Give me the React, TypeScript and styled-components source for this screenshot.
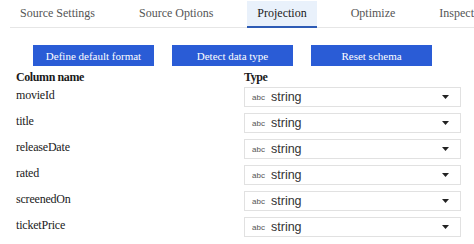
import React, { FC } from 'react';
import styled, { createGlobalStyle } from 'styled-components';

const GlobalStyle = createGlobalStyle`
  html, body {
    margin: 0;
    padding: 0;
    background: #ffffff;
  }
  body {
    font-family: 'Liberation Serif', 'Times New Roman', serif;
    color: #1a1a1a;
    overflow: hidden;
  }
`;

const tabs = ['Source Settings', 'Source Options', 'Projection', 'Optimize', 'Inspect'];
const columns = ['movieId', 'title', 'releaseDate', 'rated', 'screenedOn', 'ticketPrice'];

const Page = styled.div`
  width: 474px;
  height: 244px;
  overflow: hidden;
`;

const TabBar = styled.div`
  display: flex;
  gap: 24px;
  height: 27px;
  margin-left: 10px;
  border-bottom: 1px solid #e6e6e6;
  white-space: nowrap;
`;

const Tab = styled.div<{ $active?: boolean }>`
  display: flex;
  align-items: center;
  padding: 0 10px;
  margin-top: 1px;
  font-size: 12px;
  color: ${(p) => (p.$active ? '#1a1a1a' : '#555555')};
  background: ${(p) => (p.$active ? '#e9f1fb' : 'transparent')};
  border-bottom: 2px solid ${(p) => (p.$active ? '#2d5bb5' : 'transparent')};
  margin-bottom: -1px;
`;

const Toolbar = styled.div`
  display: flex;
  gap: 18px;
  padding-left: 33px;
  margin-top: 17px;
`;

const Button = styled.button`
  width: 121px;
  height: 21px;
  border: none;
  border-radius: 0;
  background: #2a5cd6;
  color: #ffffff;
  font-family: 'Liberation Serif', 'Times New Roman', serif;
  font-size: 11px;
  padding: 0;
  cursor: pointer;
`;

const Table = styled.div`
  display: grid;
  grid-template-columns: 228px 217px;
  row-gap: 6px;
  padding-left: 16px;
  margin-top: 3px;
`;

const HeaderCell = styled.div`
  font-weight: bold;
  font-size: 12px;
  letter-spacing: -0.4px;
  height: 17px;
  line-height: 17px;
  margin-bottom: -5px;
`;

const NameCell = styled.div`
  display: flex;
  align-items: center;
  height: 20px;
  font-size: 12px;
  letter-spacing: -0.2px;
  padding-bottom: 3px;
  box-sizing: border-box;
`;

const Select = styled.div`
  display: flex;
  align-items: center;
  height: 20px;
  box-sizing: border-box;
  border: 1px solid #e1e1e1;
  padding: 0 11px 0 7px;
  font-family: 'Liberation Sans', Arial, sans-serif;
`;

const TypeBadge = styled.span`
  font-size: 8px;
  color: #555555;
  width: 19px;
`;

const TypeName = styled.span`
  flex: 1;
  font-size: 12.5px;
  color: #333333;
`;

const Caret = styled.svg`
  display: block;
`;

const TypeSelect: FC = () => (
  <Select>
    <TypeBadge>abc</TypeBadge>
    <TypeName>string</TypeName>
    <Caret width="7" height="4" viewBox="0 0 7 4">
      <path d="M0 0H7L3.5 4Z" fill="#222222" />
    </Caret>
  </Select>
);

const App: FC = () => (
  <Page>
    <GlobalStyle />
    <TabBar>
      {tabs.map((t) => (
        <Tab key={t} $active={t === 'Projection'}>
          {t}
        </Tab>
      ))}
    </TabBar>
    <Toolbar>
      <Button>Define default format</Button>
      <Button>Detect data type</Button>
      <Button>Reset schema</Button>
    </Toolbar>
    <Table>
      <HeaderCell>Column name</HeaderCell>
      <HeaderCell>Type</HeaderCell>
      {columns.map((c) => (
        <React.Fragment key={c}>
          <NameCell>{c}</NameCell>
          <TypeSelect />
        </React.Fragment>
      ))}
    </Table>
  </Page>
);

export default App;
